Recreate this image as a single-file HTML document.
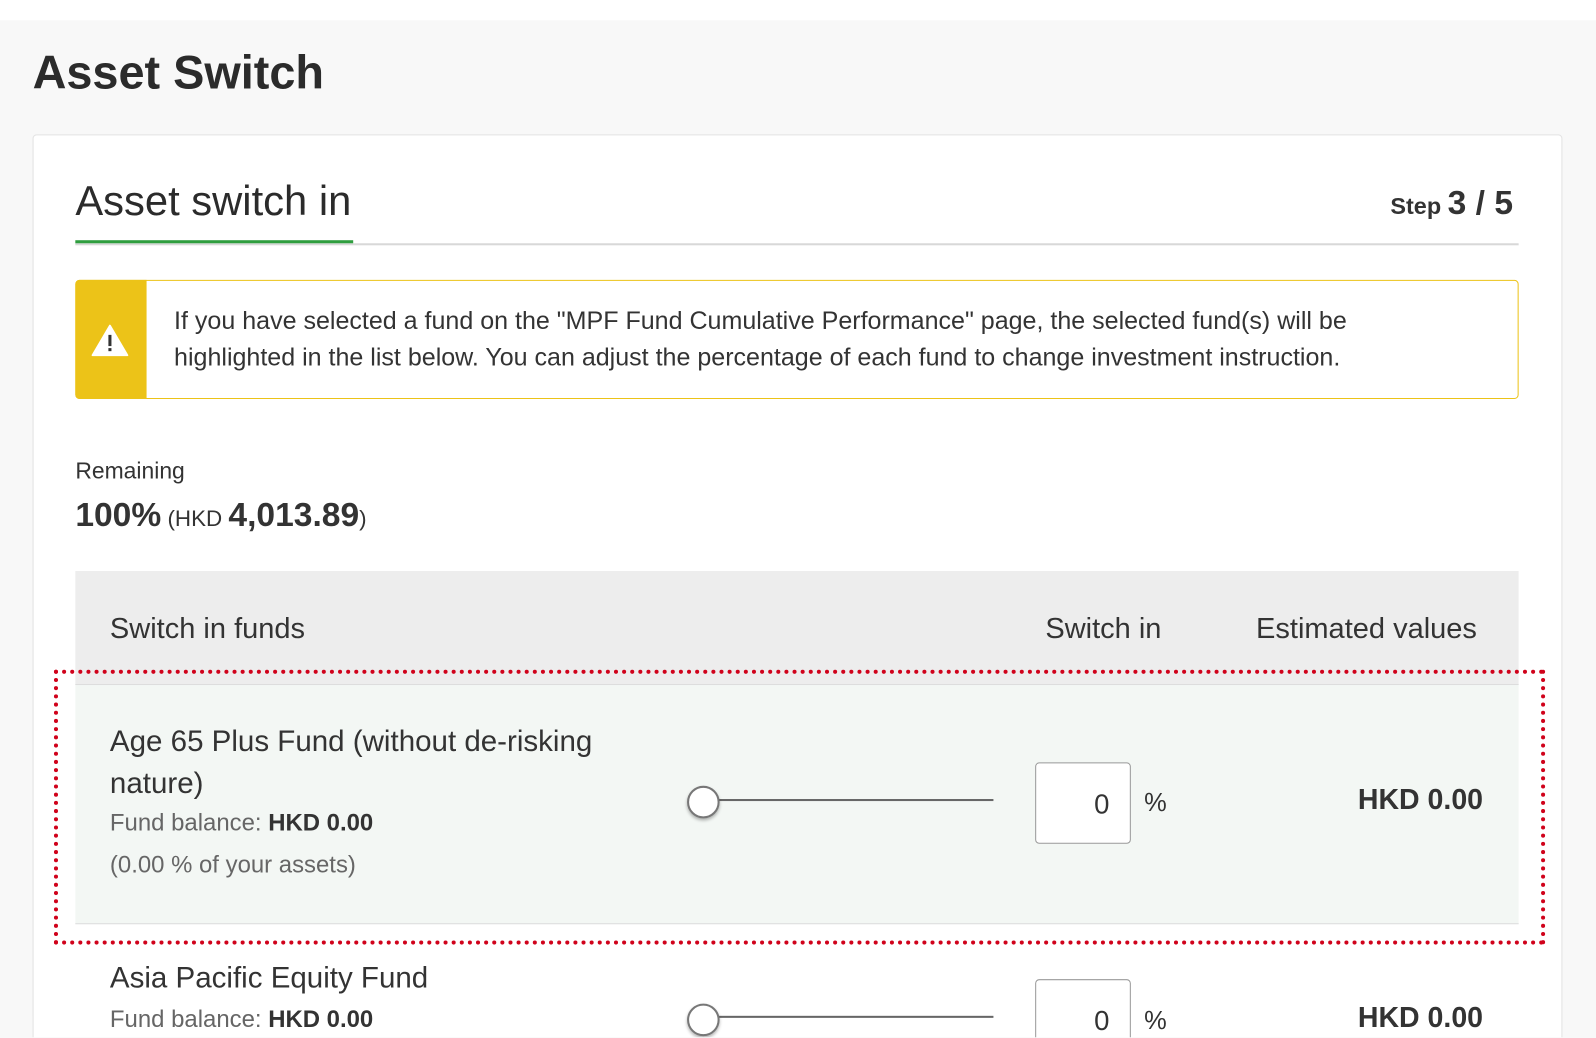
<!DOCTYPE html>
<html style="overflow:hidden;width:1596px;height:1038px"><head><style>
body{margin:0;width:1596px;height:1038px;overflow:hidden;background:#f8f8f8;font-family:"Liberation Sans",sans-serif;color:#333;position:relative}
#w{position:absolute;left:0;top:0;width:1568px;height:1019px;overflow:hidden;transform:scale(1.01786);transform-origin:0 0}
.a{position:absolute}
.top{left:0;top:0;width:1568px;height:20px;background:#fff}
</style></head><body><div id="w">
<div class="a top"></div>
<div class="a" style="left:32px;top:44px;font-size:46px;font-weight:bold;color:#2b2b2b">Asset Switch</div>
<div class="a" style="left:32px;top:132px;width:1501px;height:900px;background:#fff;border:1px solid #e3e3e3;border-radius:4px"></div>
<div class="a" style="left:74px;top:174px;font-size:41px;color:#2b2b2b">Asset switch in</div>
<div class="a" style="left:1366px;top:180px;font-size:23px;color:#333"><b>Step</b> <b style="font-size:33px">3 / 5</b></div>
<div class="a" style="left:74px;top:239px;width:1418px;height:2px;background:#d8d8d8"></div>
<div class="a" style="left:74px;top:236px;width:273px;height:3px;background:#2f9e3f"></div>
<div class="a" style="left:74px;top:275px;width:1416px;height:115px;border:1px solid #ecc318;border-radius:4px;background:#fff"></div>
<div class="a" style="left:74px;top:275px;width:70px;height:117px;background:#ecc318;border-radius:4px 0 0 4px"></div>
<svg class="a" style="left:89px;top:318px" width="38" height="32" viewBox="0 0 38 32"><path d="M19 2 L36 31 L2 31 Z" fill="#fff" stroke="#fff" stroke-linejoin="round" stroke-width="2"/><rect x="17.5" y="11" width="3" height="11" fill="#333"/><rect x="17.5" y="24" width="3" height="3" fill="#333"/></svg>
<div class="a" style="left:171px;top:298px;width:1310px;font-size:24.6px;line-height:36px;color:#333;white-space:nowrap">If you have selected a fund on the "MPF Fund Cumulative Performance" page, the selected fund(s) will be<br>highlighted in the list below. You can adjust the percentage of each fund to change investment instruction.</div>
<div class="a" style="left:74px;top:450px;font-size:22.5px;color:#333">Remaining</div>
<div class="a" style="left:74px;top:487px;font-size:22px;color:#333"><b style="font-size:33px">100%</b> (HKD <b style="font-size:33px">4,013.89</b>)</div>
<div class="a" style="left:74px;top:561px;width:1418px;height:111px;background:#ededed"></div>
<div class="a" style="left:108px;top:602px;font-size:28.5px;color:#333">Switch in funds</div>
<div class="a" style="left:1027px;top:602px;font-size:28.5px;color:#333">Switch in</div>
<div class="a" style="left:1234px;top:602px;font-size:28.5px;color:#333">Estimated values</div>
<div class="a" style="left:74px;top:672px;width:1418px;height:234px;background:#f3f7f4;border-top:1px solid #ddd;border-bottom:1px solid #ddd"></div>
<div class="a" style="left:53px;top:658px;width:1457px;height:262px;border:4px dotted #d0021b"></div>
<div class="a" style="left:108px;top:709px;font-size:29px;line-height:41px;color:#333;white-space:nowrap">Age 65 Plus Fund (without de-risking<br>nature)</div>
<div class="a" style="left:108px;top:795px;font-size:23.5px;color:#666">Fund balance: <b style="color:#333">HKD 0.00</b></div>
<div class="a" style="left:108px;top:836px;font-size:23.5px;color:#666">(0.00 % of your assets)</div>
<div class="a" style="left:690px;top:785px;width:286px;height:2px;background:#666"></div>
<div class="a" style="left:675px;top:772px;width:28px;height:28px;border-radius:50%;background:#fff;border:2px solid #777;box-shadow:0 2px 3px rgba(0,0,0,.3)"></div>
<div class="a" style="left:1017px;top:749px;width:92px;height:78px;border:1px solid #999;border-radius:4px;background:#fff;font-size:27px;text-align:right;line-height:80px"><span style="padding-right:20px">0</span></div>
<div class="a" style="left:1124px;top:775px;font-size:25px">%</div>
<div class="a" style="left:1200px;top:770px;width:257px;text-align:right;font-size:28px;font-weight:bold;color:#333">HKD 0.00</div>
<div class="a" style="left:108px;top:945px;font-size:29px;color:#333">Asia Pacific Equity Fund</div>
<div class="a" style="left:108px;top:988px;font-size:23.5px;color:#666">Fund balance: <b style="color:#333">HKD 0.00</b></div>
<div class="a" style="left:690px;top:998px;width:286px;height:2px;background:#666"></div>
<div class="a" style="left:675px;top:986px;width:28px;height:28px;border-radius:50%;background:#fff;border:2px solid #777;box-shadow:0 2px 3px rgba(0,0,0,.3)"></div>
<div class="a" style="left:1017px;top:962px;width:92px;height:78px;border:1px solid #999;border-radius:4px;background:#fff;font-size:27px;text-align:right;line-height:80px"><span style="padding-right:20px">0</span></div>
<div class="a" style="left:1124px;top:989px;font-size:25px">%</div>
<div class="a" style="left:1200px;top:984px;width:257px;text-align:right;font-size:28px;font-weight:bold;color:#333">HKD 0.00</div>
</div></body></html>
